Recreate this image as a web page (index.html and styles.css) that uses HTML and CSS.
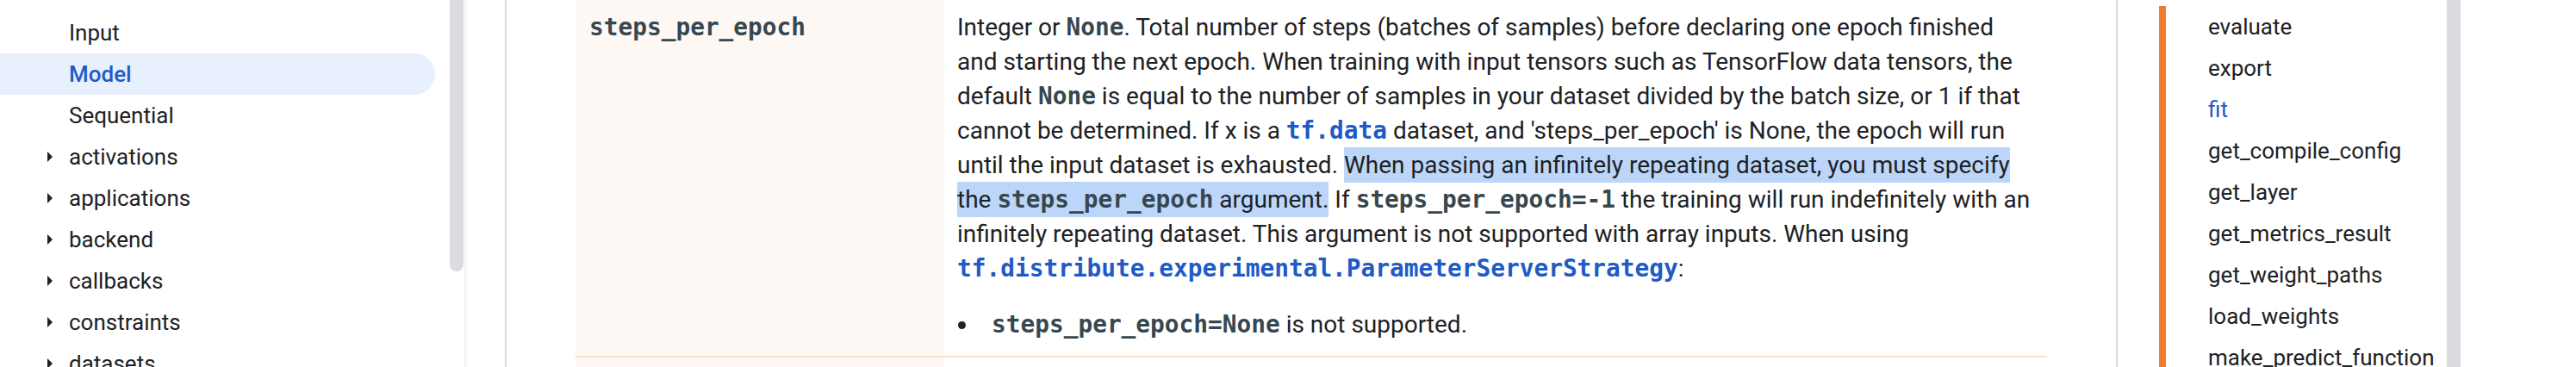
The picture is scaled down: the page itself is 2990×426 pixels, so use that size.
FILE: index.html
```html
<!DOCTYPE html>
<html>
<head>
<meta charset="utf-8">
<link rel="stylesheet" href="styles.css">
</head>
<body>
<div class="page">
  <nav class="sidenav">
    <ul class="navlist">
      <li class="navitem"><span class="caret-space"></span>Overview</li>
      <li class="navitem"><span class="caret-space"></span>Input</li>
      <li class="navitem active"><span class="caret-space"></span>Model</li>
      <li class="navitem"><span class="caret-space"></span>Sequential</li>
      <li class="navitem"><span class="caret"></span>activations</li>
      <li class="navitem"><span class="caret"></span>applications</li>
      <li class="navitem"><span class="caret"></span>backend</li>
      <li class="navitem"><span class="caret"></span>callbacks</li>
      <li class="navitem"><span class="caret"></span>constraints</li>
      <li class="navitem"><span class="caret"></span>datasets</li>
    </ul>
    <div class="navscroll"><div class="navthumb"></div></div>
  </nav>
  <main class="content">
    <table class="params">
      <tr>
        <td class="pkey"><code class="kcode">steps_per_epoch</code></td>
        <td class="pdesc">
          <p>Integer or <code>None</code>. Total number of steps (batches of samples) before declaring one epoch finished and starting the next epoch. When training with input tensors such as TensorFlow data tensors, the default <code>None</code> is equal to the number of samples in your dataset divided by the batch size, or 1 if that cannot be determined. If x is a <a class="clink"><code>tf.data</code></a> dataset, and 'steps_per_epoch' is None, the epoch will run until the input dataset is exhausted. <span class="sel">When passing an infinitely repeating dataset, you must specify the <code>steps_per_epoch</code> argument.</span> If <code>steps_per_epoch=-1</code> the training will run indefinitely with an infinitely repeating dataset. This argument is not supported with array inputs. When using <a class="clink"><code>tf.distribute.experimental.ParameterServerStrategy</code></a>:</p>
          <ul class="bul">
            <li><code>steps_per_epoch=None</code> is not supported.</li>
          </ul>
        </td>
      </tr>
      <tr>
        <td class="pkey"></td>
        <td class="pdesc"></td>
      </tr>
    </table>
  </main>
  <aside class="toc">
    <ul class="toclist">
      <li class="tocitem">evaluate</li>
      <li class="tocitem">export</li>
      <li class="tocitem current">fit</li>
      <li class="tocitem">get_compile_config</li>
      <li class="tocitem">get_layer</li>
      <li class="tocitem">get_metrics_result</li>
      <li class="tocitem">get_weight_paths</li>
      <li class="tocitem">load_weights</li>
      <li class="tocitem">make_predict_function</li>
    </ul>
    <div class="tocscroll"></div>
  </aside>
</div>
</body>
</html>
```
FILE: styles.css
```css
html, body {
  margin: 0;
  padding: 0;
  background: #ffffff;
}
body {
  width: 2990px;
  height: 426px;
  overflow: hidden;
  font-family: Roboto, "Liberation Sans", sans-serif;
  color: #202124;
}
.page {
  display: flex;
  height: 426px;
  overflow: hidden;
}

/* left navigation */
.sidenav {
  width: 539px;
  flex: none;
  display: flex;
  box-shadow: 2px 0 3px rgba(0, 0, 0, 0.08);
  position: relative;
  z-index: 1;
}
.navlist {
  list-style: none;
  margin: -34px 0 0 0;
  padding: 0;
  width: 505px;
  flex: none;
}
.navitem {
  height: 48px;
  display: flex;
  align-items: center;
  font-size: 26px;
  padding-left: 52px;
  border-radius: 0 24px 24px 0;
}
.navitem.active {
  background: #e8f0fe;
  color: #1f5bc6;
  font-weight: 500;
}
.caret-space,
.caret {
  width: 28px;
  flex: none;
  display: inline-block;
}
.caret {
  height: 12px;
  position: relative;
}
.caret::before {
  content: "";
  position: absolute;
  left: 3px;
  top: 0;
  border-left: 6px solid #202124;
  border-top: 6px solid transparent;
  border-bottom: 6px solid transparent;
}
.navscroll {
  margin-left: 17px;
  width: 16px;
  flex: none;
}
.navthumb {
  height: 315px;
  background: #dadce0;
  border-radius: 0 0 8px 8px;
}

/* main */
.content {
  margin-left: 47px;
  border-left: 2px solid #dadce0;
  width: 1870px;
  flex: none;
  padding: 0 80px;
  box-sizing: border-box;
}
.params {
  border-collapse: collapse;
  width: 1708px;
  table-layout: fixed;
}
.params td {
  vertical-align: top;
  padding: 12px 12px 0 16px;
  border-bottom: 2px solid #fbe0c8;
}
.pkey {
  width: 399px;
  background: #fdf8f4;
}
.pdesc {
  font-size: 28px;
  line-height: 40px;
}
.pdesc p {
  margin: 0;
}
code {
  font-family: "DejaVu Sans Mono", "Liberation Mono", monospace;
  font-size: 27.8px;
  color: #37474f;
  font-weight: bold;
}
.kcode {
  line-height: 40px;
  display: block;
}
.clink code {
  color: #1f5bc6;
}
.sel {
  background: #bcd6fa;
  padding: 3.6px 0;
}
.bul {
  margin: 25px 0 16px 0;
  padding-left: 40px;
  list-style: none;
}
.bul li {
  position: relative;
}
.bul li::before {
  content: "";
  position: absolute;
  left: -39px;
  top: 16px;
  width: 9px;
  height: 9px;
  border-radius: 50%;
  background: #202124;
}

/* right toc */
.toc {
  border-left: 2px solid #dadce0;
  flex: none;
  display: flex;
  padding-left: 48px;
}
.toclist {
  list-style: none;
  margin: 7px 0 0 0;
  padding: 0 0 0 49px;
  border-left: 8px solid #ef7a30;
  width: 277px;
  flex: none;
}
.tocitem {
  height: 48px;
  display: flex;
  align-items: center;
  font-size: 26px;
  white-space: nowrap;
}
.tocitem.current {
  color: #1f5bc6;
}
.tocscroll {
  width: 16px;
  background: #dadce0;
  flex: none;
}
```
